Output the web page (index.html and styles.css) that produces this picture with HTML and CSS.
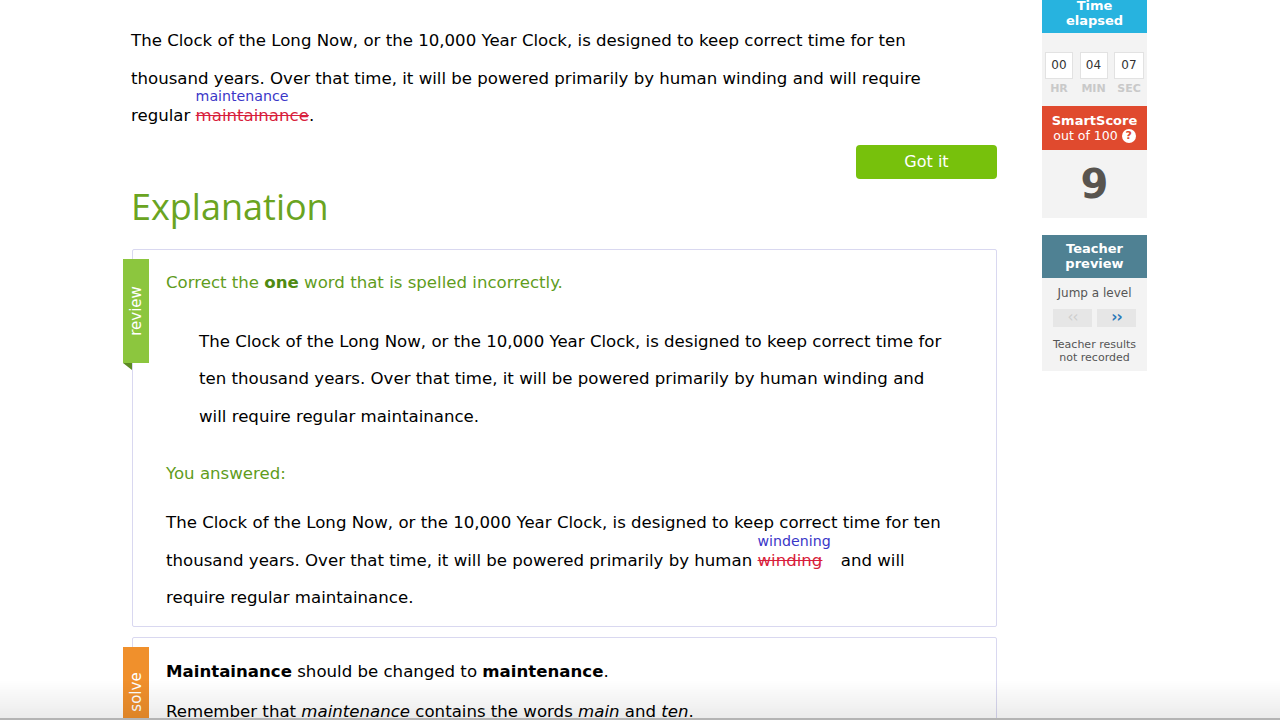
FILE: index.html
```html
<!DOCTYPE html>
<html lang="en">
<head>
<meta charset="utf-8">
<title>Explanation</title>
<link rel="stylesheet" href="styles.css">
</head>
<body>
<div class="page">
  <main class="main">
    <p class="passage top-passage">The Clock of the Long Now, or the 10,000 Year Clock, is designed to keep correct time for ten thousand years. Over that time, it will be powered primarily by human winding and will require regular <span class="fix"><span class="fix-new">maintenance</span><span class="fix-old">maintainance</span></span>.</p>
    <div class="btn-row"><button class="got-it">Got it</button></div>
    <h1 class="expl-title">Explanation</h1>

    <section class="card review-card">
      <div class="tab tab-review"><span>review</span></div>
      <p class="prompt">Correct the <b>one</b> word that is spelled incorrectly.</p>
      <p class="passage indent">The Clock of the Long Now, or the 10,000 Year Clock, is designed to keep correct time for ten thousand years. Over that time, it will be powered primarily by human winding and will require regular maintainance.</p>
      <p class="prompt answered">You answered:</p>
      <p class="passage answer">The Clock of the Long Now, or the 10,000 Year Clock, is designed to keep correct time for ten thousand years. Over that time, it will be powered primarily by human <span class="fix"><span class="fix-new">windening</span><span class="fix-old">winding</span></span> and will require regular maintainance.</p>
    </section>

    <section class="card solve-card">
      <div class="tab tab-solve"><span>solve</span></div>
      <p class="solve-line"><b>Maintainance</b> should be changed to <b>maintenance</b>.</p>
      <p class="solve-line">Remember that <i>maintenance</i> contains the words <i>main</i> and <i>ten</i>.</p>
    </section>
  </main>

  <aside class="sidebar">
    <div class="side-head time-head">Time<br>elapsed</div>
    <div class="side-panel timer-panel">
      <div class="timer">
        <div class="tcell"><div class="tbox">00</div><div class="tlabel">HR</div></div>
        <div class="tcell"><div class="tbox">04</div><div class="tlabel">MIN</div></div>
        <div class="tcell"><div class="tbox">07</div><div class="tlabel">SEC</div></div>
      </div>
    </div>
    <div class="side-head score-head">SmartScore<br><span class="score-sub">out of 100 <span class="qmark">?</span></span></div>
    <div class="side-panel score-panel">9</div>

    <div class="side-head teacher-head">Teacher<br>preview</div>
    <div class="side-panel teacher-panel">
      <div class="jump">Jump a level</div>
      <div class="jump-btns">
        <span class="jbtn prev">&lsaquo;&lsaquo;</span>
        <span class="jbtn next">&rsaquo;&rsaquo;</span>
      </div>
      <div class="note">Teacher results<br>not recorded</div>
    </div>
  </aside>
</div>
<div class="bottom-shade"></div>
</body>
</html>
```

FILE: styles.css
```css
* { box-sizing: border-box; }
html, body { margin: 0; padding: 0; background: #fff; }
body {
  font-family: "DejaVu Sans", Verdana, sans-serif;
  color: #000;
  overflow: hidden;
  height: 720px;
}
.page {
  display: flex;
  align-items: flex-start;
  padding-left: 131px;
  gap: 45px;
}
.main {
  width: 866px;
  padding-top: 22px;
}
p { margin: 0; }
.passage {
  font-size: 16.6px;
  line-height: 37.5px;
}
.top-passage { width: 810px; }
.fix {
  display: inline-block;
  position: relative;
  line-height: 16px;
}
.fix-new {
  position: absolute;
  left: 0;
  top: -19px;
  font-size: 14.2px;
  line-height: 15px;
  color: #3a36c8;
  white-space: nowrap;
}
.fix-old {
  color: #d81e3c;
  text-decoration: line-through;
}
.answer .fix { min-width: 75px; margin-right: 3px; }
.btn-row {
  display: flex;
  justify-content: flex-end;
  margin-top: 10px;
}
.got-it {
  width: 141px;
  height: 34px;
  border: 0;
  border-radius: 4px;
  background: #77c10c;
  color: #fff;
  font-family: "DejaVu Sans", Verdana, sans-serif;
  font-size: 16px;
}
.expl-title {
  margin: 8px 0 0 0;
  font-family: "Open Sans", sans-serif;
  font-weight: 400;
  font-size: 36px;
  line-height: 40px;
  color: #6aa421;
}
.card {
  position: relative;
  margin-left: 1px;
  border: 1px solid #d9d8f0;
  border-radius: 2px;
}
.review-card {
  margin-top: 22px;
  height: 378px;
  padding: 21px 41px 0 33px;
}
.tab {
  position: absolute;
  left: -10px;
  top: 9px;
  width: 26px;
  display: flex;
  align-items: center;
  justify-content: center;
  color: #fff;
  font-size: 15px;
}
.tab span {
  transform: rotate(-90deg);
  white-space: nowrap;
}
.tab-review {
  height: 104px;
  background: #8cc63e;
}
.tab-review::after {
  content: "";
  position: absolute;
  left: 0;
  bottom: -7px;
  border-top: 7px solid #5c8a22;
  border-left: 9px solid transparent;
}
.tab-solve {
  height: 90px;
  background: #f0902c;
}
.prompt {
  font-size: 16.6px;
  line-height: 24px;
  color: #5f9c1d;
}
.prompt b { color: #4f8a12; }
.indent {
  margin: 28px 0 0 33px;
}
.answered { margin-top: 27px; }
.answer { margin-top: 18px; }
.solve-card {
  margin-top: 10px;
  height: 120px;
  padding: 22px 34px 0 33px;
}
.solve-line {
  font-size: 16.6px;
  line-height: 24px;
}
.solve-line + .solve-line { margin-top: 16px; }

/* Sidebar */
.sidebar {
  width: 105px;
  display: flex;
  flex-direction: column;
  text-align: center;
}
.side-head {
  color: #fff;
  font-weight: bold;
  font-size: 13px;
  line-height: 15px;
}
.time-head {
  background: #27b3df;
  margin-top: -12px;
  height: 45px;
  display: flex;
  flex-direction: column;
  justify-content: flex-end;
  padding-bottom: 5px;
}
.side-panel { background: #f3f3f3; }
.timer-panel {
  padding: 19px 3px 10px 3px;
}
.timer {
  display: flex;
  justify-content: space-between;
}
.tcell { display: flex; flex-direction: column; align-items: center; }
.tbox {
  width: 28px;
  height: 27px;
  background: #fff;
  border: 1px solid #e2e2e2;
  font-size: 12px;
  line-height: 25px;
  color: #333;
}
.tcell:last-child .tbox { width: 30px; }
.tlabel {
  margin-top: 3px;
  font-size: 11px;
  font-weight: bold;
  color: #c9c9c9;
  line-height: 14px;
}
.score-head {
  background: #e04a2e;
  height: 44px;
  padding-top: 7px;
}
.score-sub {
  font-weight: normal;
  font-size: 12.5px;
  display: inline-flex;
  align-items: center;
  gap: 4px;
}
.qmark {
  display: inline-block;
  width: 14px;
  height: 14px;
  border-radius: 50%;
  background: #fff;
  color: #e04a2e;
  font-weight: bold;
  font-size: 11px;
  line-height: 14px;
  text-align: center;
}
.score-panel {
  height: 68px;
  font-size: 40px;
  font-weight: bold;
  line-height: 68px;
  color: #58544f;
}
.teacher-head {
  margin-top: 17px;
  background: #4f8193;
  height: 43px;
  padding-top: 6px;
}
.teacher-panel {
  height: 93px;
  padding-top: 8px;
  color: #555;
}
.jump { font-size: 12px; line-height: 15px; }
.jump-btns {
  display: flex;
  justify-content: center;
  gap: 5px;
  margin-top: 8px;
}
.jbtn {
  width: 39px;
  height: 18px;
  background: #e6e6e6;
  font-size: 15px;
  line-height: 17px;
  letter-spacing: -1px;
}
.jbtn.prev { color: #cdcdcd; }
.jbtn.next { color: #2a78b8; font-weight: bold; }
.note {
  margin-top: 11px;
  font-size: 11px;
  line-height: 13px;
}
.bottom-shade {
  position: fixed;
  left: 0;
  right: 0;
  bottom: 0;
  height: 40px;
  background: linear-gradient(to bottom, rgba(0,0,0,0), rgba(0,0,0,0.08));
  border-bottom: 2px solid #b4b4b4;
  pointer-events: none;
}
```
